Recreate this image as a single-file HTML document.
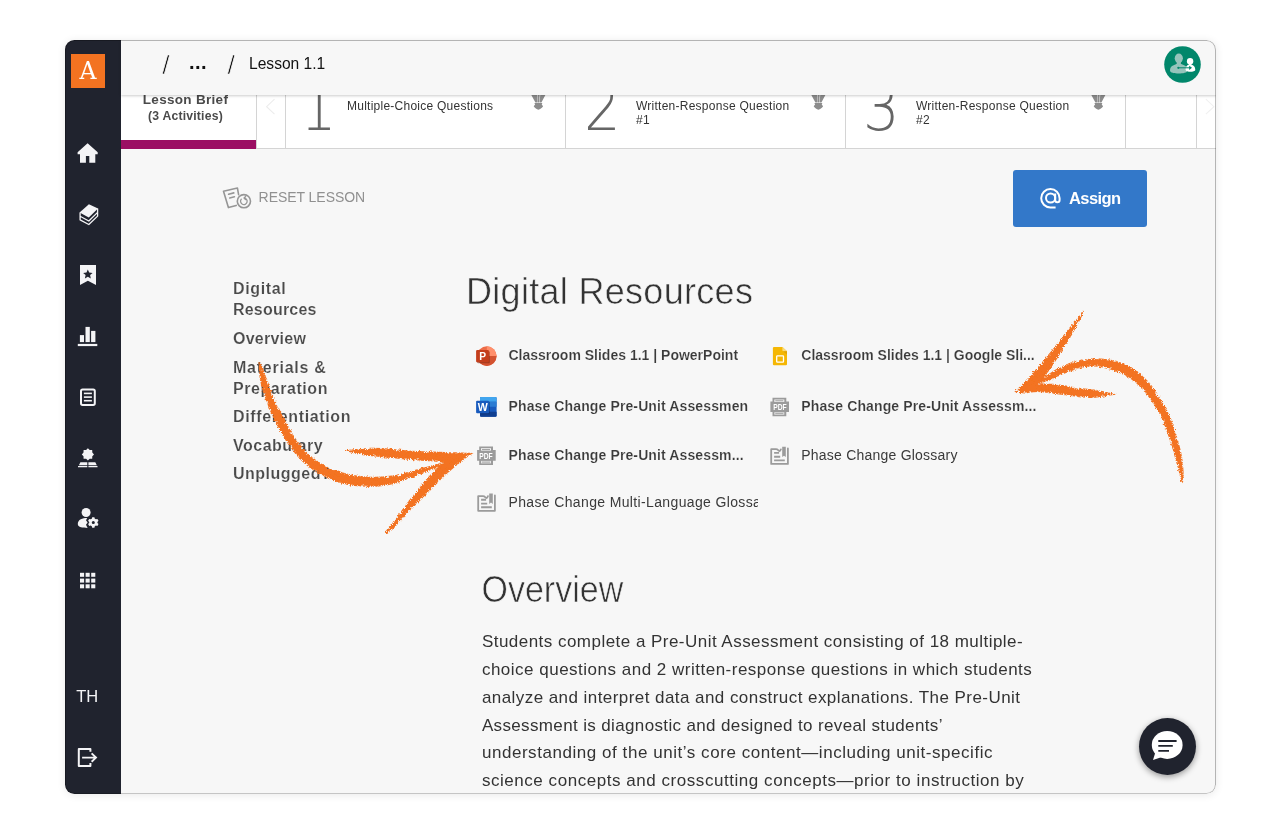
<!DOCTYPE html>
<html lang="en">
<head>
<meta charset="utf-8">
<title>Lesson 1.1</title>
<style>
*{box-sizing:border-box;margin:0;padding:0}
html,body{width:1280px;height:836px;overflow:hidden;background:#fff}
body{font-family:"Liberation Sans",sans-serif;color:#333;position:relative}
#shadow{position:absolute;left:65px;top:40.2px;width:1151px;height:754.1px;border-radius:9.5px;box-shadow:0 1px 8px rgba(0,0,0,.09)}
#frame{position:absolute;left:65px;top:40.2px;width:1151px;height:754.1px;border-radius:9.5px;overflow:hidden;background:#f7f7f7}
#frame:after{content:"";position:absolute;left:0;top:0;right:0;bottom:0;border:1px solid rgba(0,0,0,.27);border-bottom-color:rgba(0,0,0,.2);border-radius:9.5px;z-index:20}
#wrap{position:absolute;left:-65px;top:-40.2px;width:1280px;height:836px;will-change:transform}
.abs{position:absolute}
#side{position:absolute;left:65px;top:40px;width:56px;height:756px;background:#20232e}
#logo{position:absolute;left:71px;top:54px;width:34.2px;height:33.6px;background:#f37321;color:#fff;font-family:"DejaVu Serif","Liberation Serif",serif;font-size:23.5px;line-height:34.4px;text-align:center}
#th{position:absolute;left:65px;top:686px;width:44.5px;text-align:center;font-size:16.5px;line-height:20px;color:#f4f4f6;z-index:6}
#topbar{position:absolute;left:121px;top:40px;width:1096px;height:55px;background:#f7f7f7;box-shadow:0 1px 2.5px rgba(0,0,0,.2);z-index:3}
.sl{font-size:26.5px;color:#333;top:51.5px!important;-webkit-text-stroke:.7px #f7f7f7}
.cr{position:absolute;top:50px;line-height:26px;color:#111;z-index:4;white-space:nowrap}
#tabs{position:absolute;left:121px;top:95px;width:1096px;height:54px;background:#fff;border-bottom:1px solid #d4d4d4;z-index:1}
.vline{position:absolute;top:95px;width:1px;height:53px;background:#d4d4d4;z-index:2}
.tabtxt{position:absolute;font-size:12px;line-height:14.25px;color:#333;z-index:2;letter-spacing:.25px;white-space:nowrap}
.bignum{position:absolute;z-index:2;font-family:"DejaVu Sans Light","DejaVu Sans","Liberation Sans",sans-serif;font-weight:200;font-size:64px;line-height:70px;color:#666;top:73px;transform:scaleX(.9);transform-origin:0 0}
#brief{position:absolute;left:121px;top:92px;width:129px;text-align:center;font-weight:bold;color:#4a4a4a;z-index:2;white-space:nowrap}
#brief .a{font-size:13.5px;line-height:16px;letter-spacing:.3px}
#brief .b{font-size:12.2px;line-height:16px;letter-spacing:.2px}
#bar{position:absolute;left:121px;top:140.3px;width:134.6px;height:8.4px;background:#9b0f63;z-index:2}
#reset{position:absolute;left:258.6px;top:188px;font-size:14px;line-height:18px;color:#909090;letter-spacing:-.05px;white-space:nowrap}
#assign{position:absolute;left:1012.5px;top:169.8px;width:134.4px;height:57px;background:#3378c9;border-radius:3px}
#assign span{position:absolute;left:56.5px;top:18px;color:#fff;font-size:16.5px;font-weight:bold;line-height:20px;letter-spacing:-.6px}
#nav{position:absolute;left:233px;top:278.2px;font-size:16px;font-weight:bold;color:#4a4a4a;line-height:21px;white-space:nowrap;-webkit-text-stroke:.15px #f7f7f7}
#nav div{margin-bottom:7.66px}
h1{position:absolute;left:466px;top:269px;font-size:36px;font-weight:normal;color:#333;line-height:46px;white-space:nowrap;letter-spacing:.3px;-webkit-text-stroke:.55px #f7f7f7}
.res{position:absolute;font-size:14px;line-height:16px;color:#3a3a3a;white-space:nowrap;overflow:hidden;letter-spacing:.22px}
.res.b{font-weight:bold;letter-spacing:.12px;-webkit-text-stroke:.15px #f7f7f7}
.ico{position:absolute}
.il{position:absolute;color:#fff;font-weight:bold;line-height:11px;z-index:3}
h2{position:absolute;left:481.5px;top:570px;transform:scaleY(1.09);transform-origin:0 32px;font-size:34px;font-weight:normal;color:#333;line-height:40px;-webkit-text-stroke:.6px #f7f7f7}
#para{position:absolute;left:481.9px;top:628px;width:600px;font-size:17px;line-height:27.85px;color:#333;white-space:nowrap}
#chat{position:absolute;left:1138.9px;top:718.3px;width:56.8px;height:56.8px;border-radius:50%;background:#20232e;box-shadow:0 2px 6px rgba(0,0,0,.4)}
#avatar{position:absolute;left:1164px;top:44px;width:38px;height:38px;border-radius:50%;background:#12906a;z-index:5}
</style>
</head>
<body>
<div id="shadow"></div>
<div id="frame"><div id="wrap">
<div id="side"></div>
<div id="logo">A</div>
<div id="th">TH</div>
<svg class="abs" style="left:0;top:0;z-index:6" width="1280" height="836" viewBox="0 0 1280 836">
<g fill="#f4f4f6">
<path d="M87.6 143.3 L97.7 152.3 V154.2 H95.3 V162.8 H89.3 V156 H85.9 V162.8 H80 V154.2 H77.6 V152.3 Z"/>
<path d="M88.9 204.2 L98 208.4 L88.8 217.5 L79.6 212.4 Z"/>
<path d="M80 265 H96 V284.9 L87.9 280.7 L80 284.9 Z M87.8 269.4 L89.2 272.5 L92.6 272.9 L90.1 275.1 L90.8 278.4 L87.8 276.8 L84.9 278.4 L85.6 275.1 L83.1 272.9 L86.5 272.5 Z" fill-rule="evenodd"/>
<rect x="77.8" y="343.9" width="19.5" height="2.2"/>
<rect x="79.9" y="335.1" width="4.1" height="7"/>
<rect x="85.5" y="326.9" width="4.3" height="15.2"/>
<rect x="91.1" y="330.9" width="4.3" height="11.2"/>
<rect x="83.9" y="392.6" width="8" height="1.6"/><rect x="83.9" y="396.3" width="8" height="1.6"/><rect x="83.9" y="399.9" width="8" height="1.6"/>
<path d="M87.9 448.3 L89.7 450 L92.2 450.1 L92.3 452.6 L94 454.4 L92.3 456.2 L92.2 458.7 L89.7 458.8 L87.9 460.5 L86.1 458.8 L83.6 458.7 L83.5 456.2 L81.8 454.4 L83.5 452.6 L83.6 450.1 L86.1 450 Z"/>
<path d="M80.4 462.2 H87.3 V465.3 H78.9 Z M88.4 462.2 H95.3 L96.8 465.3 H88.4 Z M78 466 H87.3 V467.3 H78 Z M88.4 466 H97.5 V467.3 H88.4 Z"/>
<circle cx="86.1" cy="512.5" r="4.5"/>
<path d="M77.8 524 C77.8 519.5 82.5 518 87.2 518 L86 520.2 L87.6 522.4 L86 524.8 L87.6 527.9 C83 527.9 77.8 527.4 77.8 524 Z"/>
<path d="M92.2 517.2 H94.4 L94.8 518.7 L95.9 519.3 L97.4 518.9 L98.5 520.8 L97.4 521.9 V523 L98.5 524.1 L97.4 526 L95.9 525.6 L94.8 526.2 L94.4 527.7 H92.2 L91.8 526.2 L90.7 525.6 L89.2 526 L88.1 524.1 L89.2 523 V521.9 L88.1 520.8 L89.2 518.9 L90.7 519.3 L91.8 518.7 Z M93.3 520.9 A1.55 1.55 0 1 0 93.3 524 A1.55 1.55 0 1 0 93.3 520.9 Z" fill-rule="evenodd"/>
<g id="gr"><rect x="80" y="572.8" width="4.1" height="4"/><rect x="85.6" y="572.8" width="4.1" height="4"/><rect x="91.2" y="572.8" width="4.1" height="4"/></g>
<use href="#gr" y="5.8"/><use href="#gr" y="11.5"/>
</g>
<g fill="none" stroke="#f4f4f6">
<path d="M80.1 212.6 V219.9 L88.8 224.5 L97.6 216.1 V208.6 M80.1 216.2 L88.8 221 L97.6 212.4" stroke-width="1.3" stroke-linejoin="round"/>
<rect x="81" y="389.5" width="13.8" height="15.4" rx="1.6" stroke-width="2"/>
<path d="M90.4 751.8 V749 H78.8 V766.1 H90.4 V763" stroke-width="2" stroke-linejoin="round"/>
<path d="M82.1 757.6 H95.5 M91.6 753.4 L96 757.6 L91.6 761.8" stroke-width="1.9"/>
</g>
</svg>
<div id="tabs"></div>
<div id="brief"><div class="a">Lesson Brief</div><div class="b">(3 Activities)</div></div>
<div id="bar"></div>
<div class="vline" style="left:256px"></div>
<div class="vline" style="left:285px"></div>
<div class="vline" style="left:565px"></div>
<div class="vline" style="left:845px"></div>
<div class="vline" style="left:1125px"></div>
<div class="vline" style="left:1196px"></div>
<div class="bignum" style="left:300px">1</div><div class="bignum" style="left:584px">2</div><div class="bignum" style="left:863px">3</div>
<div class="tabtxt" style="left:347px;top:99px">Multiple-Choice Questions</div>
<div class="tabtxt" style="left:636px;top:99px">Written-Response Question<br>#1</div>
<div class="tabtxt" style="left:916px;top:99px">Written-Response Question<br>#2</div>
<svg class="abs" style="left:0;top:0;z-index:2" width="1280" height="836" viewBox="0 0 1280 836">
<defs>
<g id="badge" fill="#8c8c8c"><path d="M530.8 94 H536.9 L537.7 102.6 H535.4 Z M537.4 94 H539.8 L539.2 102.6 H538 Z M540.3 94 H545.9 L541.4 102.6 H539.6 Z M534.4 103.1 H542.4 L541.7 104.6 L543.1 106.3 C542 108 540 109.4 538.4 109.7 C536.8 109.4 534.8 108 533.7 106.3 L535.1 104.6 Z"/></g>
<g id="pdf"><path d="M479.2 446.5 H493 V450.1 H495.7 V460.8 H493 V464.9 H479.2 V460.8 H477.1 V450.1 H479.2 Z" fill="#9b9b9b"/><rect x="481" y="448.2" width="10" height="2.4" fill="#f3f3f3"/><rect x="482" y="449" width="8" height=".9" fill="#9b9b9b"/><rect x="481" y="460.9" width="10" height="2.5" fill="#e4e4e4"/><rect x="482" y="461.6" width="8" height="1" fill="#a8a8a8"/></g>
<g id="gloss" fill="none" stroke="#9b9b9b"><path d="M494.9 495.4 V510.8 H478.2 V496.1 H483 C485 496.1 485.6 498 486.6 498 C487.3 498 487.6 497.2 487.9 496.2" stroke-width="1.8" stroke-linejoin="round" stroke-linecap="round"/><path d="M481.1 499.8 H486.1 M481.1 503.6 H487.2 M481.1 507.3 H491.8" stroke-width="1.9"/><path d="M489.2 493.6 H492.8 V504 L491 502.6 L489.2 504 Z" fill="#9b9b9b" stroke="none"/></g>
</defs>
<use href="#badge"/><use href="#badge" x="280"/><use href="#badge" x="560"/>
<path d="M274.5 99.2 L266.6 106.7 L274.5 114.2" fill="none" stroke="#ececec" stroke-width="1.1"/><path d="M1205.9 99.2 L1213.9 106.7 L1205.9 114.2" fill="none" stroke="#f0f0f0" stroke-width="1.1"/>
<!-- reset icon -->
<g fill="none" stroke="#969696" stroke-width="1.6" stroke-linejoin="round" stroke-linecap="round">
<path d="M238.6 194.6 L237.4 188 L223.5 191.2 L228.4 207.6 L236.2 205.4"/>
<path d="M228.6 194.2 L233.8 192.9 M229.8 198 L234.4 196.8"/>
<circle cx="243.9" cy="201.2" r="6.6"/>
<path d="M241.3 199.2 A3.3 3.3 0 1 0 244 198 M244 198 L245.6 196.6 M244 198 L245.5 199.6" stroke-width="1.3"/>
</g>
<!-- assign @ -->
<g fill="none" stroke="#fff" stroke-width="2">
<circle cx="1050.6" cy="198" r="4.6"/>
<path d="M1055.6 207.5 H1050.4 A9.2 9.2 0 1 1 1059.6 198.3 V200 A2.2 2.2 0 0 1 1055.2 200 V193.4"/>
</g>
<!-- powerpoint -->
<circle cx="486.8" cy="356.1" r="9.8" fill="#ed6c47"/>
<path d="M486.8 346.3 A9.8 9.8 0 0 1 496.6 356.1 H486.8 Z" fill="#ff8f6b"/>
<path d="M477 356.1 H496.6 A9.8 9.8 0 0 1 477 356.1 Z" fill="#d35230"/>
<rect x="477.2" y="351.2" width="12.6" height="12" rx="1" fill="#7a2a14" opacity=".55"/>
<rect x="476.1" y="350.1" width="12.8" height="12.1" rx="1" fill="#c43e1c"/>
<!-- word -->
<rect x="480" y="396.9" width="16.6" height="19.9" rx="1.2" fill="#185abd"/>
<path d="M481.2 396.9 H495.4 A1.2 1.2 0 0 1 496.6 398.1 V401.8 H480 V398.1 A1.2 1.2 0 0 1 481.2 396.9 Z" fill="#41a5ee"/>
<rect x="480" y="401.8" width="16.6" height="5" fill="#2b7cd3"/>
<path d="M480 411.8 H496.6 V415.6 A1.2 1.2 0 0 1 495.4 416.8 H481.2 A1.2 1.2 0 0 1 480 415.6 Z" fill="#103f91"/>
<rect x="480" y="401.8" width="10" height="12.6" fill="#0b2a63" opacity=".45"/>
<rect x="476.1" y="400.7" width="12.9" height="12.5" rx="1" fill="#185abd"/>
<!-- google slides -->
<path d="M774 346.9 H782.4 L787 351.3 V364.2 A1.1 1.1 0 0 1 785.9 365.3 H774 A1.1 1.1 0 0 1 772.9 364.2 V348 A1.1 1.1 0 0 1 774 346.9 Z" fill="#f5b704"/>
<path d="M782.4 346.9 L787 351.3 H783.4 A1 1 0 0 1 782.4 350.3 Z" fill="#fadc7c"/>
<path d="M783 351.3 H787 V354.4 Z" fill="#d9a006" opacity=".8"/>
<rect x="776.7" y="355.9" width="6.8" height="6.3" rx=".6" fill="none" stroke="#fff" stroke-width="1.3"/>
<!-- pdf + glossary icons -->
<use href="#pdf"/><use href="#pdf" x="293.3" y="-48.7"/>
<use href="#gloss"/><use href="#gloss" x="293" y="-46.9"/>
</svg>
<div id="topbar"></div>
<div class="cr sl" style="left:162.2px">/</div><div class="cr" style="left:189px;top:49px;font-size:20px;font-weight:bold;letter-spacing:.5px">...</div><div class="cr sl" style="left:227.6px">/</div><div class="cr" style="left:249px;top:51px;font-size:15.6px">Lesson 1.1</div>
<svg id="avsvg" class="abs" style="left:1164px;top:45.5px;z-index:5" width="37" height="37" viewBox="1164 45.5 37 37">
<circle cx="1182.5" cy="64" r="18.3" fill="#01876b"/>
<ellipse cx="1178.8" cy="57.8" rx="4.1" ry="4.8" fill="#95c4bb"/><rect x="1176.7" y="60" width="4.2" height="5" fill="#95c4bb"/>
<path d="M1170 70 C1170 65.5 1173.5 64.6 1176.4 63.4 H1181.2 C1184.5 64.6 1187.4 65.4 1187.4 70 C1187.4 72.2 1183 73 1178.7 73 C1174.4 73 1170 72.2 1170 70 Z" fill="#95c4bb"/>
<circle cx="1190.1" cy="60.7" r="3.2" fill="#fff"/><rect x="1188.8" y="62" width="2.6" height="4" fill="#fff"/>
<path d="M1185.6 69.4 C1185.6 66 1187 64.6 1188.6 64.2 H1191.6 C1193.4 64.6 1195.3 66 1195.3 69.4 C1195.3 70.6 1192.6 71.2 1190.4 71.2 C1188.2 71.2 1185.6 70.6 1185.6 69.4 Z" fill="#fff"/>
<circle cx="1178.3" cy="67.3" r="1.1" fill="#01876b"/>
<path d="M1178.3 67.3 H1190" stroke="#01876b" stroke-width="1" fill="none"/>
<path d="M1189.2 65.2 L1192 67.3 L1189.2 69.4 Z" fill="#01876b"/>
</svg>
<div id="reset">RESET LESSON</div>
<div id="assign"><span>Assign</span></div>
<div id="nav"><div><span style="letter-spacing:.65px">Digital</span><br><span style="letter-spacing:.2px">Resources</span></div><div><span style="letter-spacing:.25px">Overview</span></div><div><span style="letter-spacing:.75px">Materials &amp;</span><br><span style="letter-spacing:.55px">Preparation</span></div><div><span style="letter-spacing:.65px">Differentiation</span></div><div><span style="letter-spacing:.5px">Vocabulary</span></div><div><span style="letter-spacing:.5px">Unplugged?</span></div></div>
<h1>Digital Resources</h1>
<div class="res b" style="left:508.5px;top:346.8px;letter-spacing:0">Classroom Slides 1.1 | PowerPoint</div>
<div class="res b" style="left:801.3px;top:346.8px;letter-spacing:0">Classroom Slides 1.1 | Google Sli...</div>
<div class="res b" style="left:508.5px;top:397.8px;width:239px">Phase Change Pre-Unit Assessment</div>
<div class="res b" style="left:801.3px;top:397.8px">Phase Change Pre-Unit Assessm...</div>
<div class="res b" style="left:508.5px;top:446.8px">Phase Change Pre-Unit Assessm...</div>
<div class="res" style="left:801.3px;top:446.8px">Phase Change Glossary</div>
<div class="res" style="left:508.5px;top:493.8px;width:249px;letter-spacing:.36px">Phase Change Multi-Language Glossary</div>
<div class="il" style="left:479.3px;top:350.8px;font-size:10.2px">P</div>
<div class="il" style="left:476.6px;top:402.1px;font-size:10.6px;width:12px;text-align:center;letter-spacing:-.3px">W</div>
<div class="il" style="left:476.4px;top:450.7px;font-size:8.4px;width:20px;text-align:center;transform:scaleX(.8)">PDF</div>
<div class="il" style="left:769.7px;top:402px;font-size:8.4px;width:20px;text-align:center;transform:scaleX(.8)">PDF</div>
<h2>Overview</h2>
<div id="para"><span style="letter-spacing:0.47px">Students complete a Pre-Unit Assessment consisting of 18 multiple-</span><br><span style="letter-spacing:0.5px">choice questions and 2 written-response questions in which students</span><br><span style="letter-spacing:0.44px">analyze and interpret data and construct explanations. The Pre-Unit</span><br><span style="letter-spacing:0.36px">Assessment is diagnostic and designed to reveal students’</span><br><span style="letter-spacing:0.55px">understanding of the unit’s core content—including unit-specific</span><br><span style="letter-spacing:0.546px">science concepts and crosscutting concepts—prior to instruction by</span></div>
<div id="chat"></div>
<svg class="abs" style="left:1139px;top:718px;z-index:3" width="57" height="57" viewBox="1139 718 57 57">
<ellipse cx="1167.2" cy="744.9" rx="15.4" ry="14" fill="#fff"/>
<path d="M1155.5 752 L1153 759.9 L1162 757 Z" fill="#fff"/>
<path d="M1158.3 741 H1176.6 M1158.3 745.9 H1172.8 M1158.3 750.9 H1169" stroke="#20232e" stroke-width="1.8" fill="none"/>
</svg>
<svg id="arrows" class="abs" style="left:0;top:0;z-index:7" width="1280" height="836" viewBox="0 0 1280 836">
<defs><filter id="rough" x="-5%" y="-5%" width="110%" height="110%"><feTurbulence type="fractalNoise" baseFrequency="0.3" numOctaves="2" seed="4" result="n"/><feDisplacementMap in="SourceGraphic" in2="n" scale="3" xChannelSelector="R" yChannelSelector="G" result="d"/><feMorphology in="d" operator="erode" radius="1" result="core"/><feTurbulence type="fractalNoise" baseFrequency="0.7" numOctaves="2" seed="9" result="n2"/><feColorMatrix in="n2" type="matrix" values="0 0 0 0 0 0 0 0 0 0 0 0 0 0 0 0 0 0 10 -3.9" result="mask"/><feComposite in="d" in2="mask" operator="in" result="fray"/><feMerge><feMergeNode in="core"/><feMergeNode in="fray"/></feMerge></filter></defs>
<g fill="#f37321" filter="url(#rough)">
<path d="M258.5 362.0 C258.8 365.3 259.1 375.4 260.3 381.8 C261.5 388.2 263.7 394.1 265.9 400.2 C268.1 406.3 270.5 412.5 273.4 418.6 C276.3 424.7 279.9 431.1 283.5 437.0 C287.1 442.9 291.0 448.7 295.2 453.7 C299.4 458.7 303.6 463.2 308.6 467.1 C313.6 471.0 320.1 474.5 325.3 477.2 C330.5 479.9 335.1 481.6 340.0 483.1 C344.9 484.6 348.4 485.4 354.4 486.0 C360.4 486.6 369.2 487.1 375.9 486.7 C382.6 486.3 388.6 485.4 394.6 483.8 C400.6 482.2 406.5 479.3 411.8 477.4 C417.1 475.5 421.9 474.1 426.2 472.4 C430.5 470.7 435.7 468.1 437.6 467.3 C436.7 468.3 434.8 470.0 431.9 473.1 C429.0 476.2 424.2 481.4 420.4 486.0 C416.6 490.6 412.7 495.4 408.9 500.4 C405.1 505.4 401.2 511.2 397.4 516.2 C393.6 521.2 388.0 527.3 386.0 530.5 C384.0 533.7 385.6 534.7 385.5 535.5 C387.0 534.2 391.4 530.8 394.6 527.6 C397.8 524.4 400.5 520.5 404.6 516.2 C408.7 511.9 414.2 506.6 419.0 501.8 C423.8 497.0 428.5 492.2 433.3 487.4 C438.1 482.6 442.9 477.5 447.7 473.1 C452.5 468.7 457.8 464.2 462.1 460.9 C466.4 457.5 471.6 454.3 473.5 453.0 C470.4 452.9 461.6 452.6 454.9 452.3 C448.2 452.1 440.5 451.8 433.3 451.5 C426.1 451.2 419.0 451.3 411.8 450.8 C404.6 450.3 397.5 449.2 390.3 448.7 C383.1 448.2 376.4 447.7 368.7 447.9 C361.0 448.1 348.4 449.7 344.3 450.1 L344.3 450.6 C347.2 451.4 355.0 454.0 361.5 455.1 C368.0 456.2 375.9 456.6 383.1 457.3 C390.3 458.0 397.4 458.8 404.6 459.4 C411.8 460.0 419.7 460.4 426.2 460.9 C432.7 461.4 440.5 462.1 443.4 462.3 L440.5 463.0 C436.9 464.0 426.2 466.9 419.0 468.8 C411.8 470.7 404.6 473.2 397.4 474.5 C390.2 475.8 383.1 476.6 375.9 476.7 C368.7 476.8 360.4 476.0 354.4 475.2 C348.4 474.4 344.0 472.7 340.0 471.6 C336.0 470.5 334.2 470.7 330.3 468.8 C326.4 466.9 321.1 463.5 316.9 460.4 C312.7 457.3 309.1 454.6 305.2 450.4 C301.3 446.2 297.1 440.9 293.5 435.3 C289.9 429.7 286.6 422.8 283.5 416.9 C280.4 411.0 277.7 406.0 275.1 400.2 C272.5 394.4 270.4 388.0 268.0 381.8 C265.6 375.6 262.2 366.1 261.0 363.0 Z"/>
<path d="M1014.2 392.1 C1016.0 390.4 1020.8 385.8 1024.7 381.6 C1028.7 377.4 1033.5 372.2 1037.9 367.1 C1042.3 362.1 1046.7 356.8 1051.1 351.3 C1055.5 345.8 1060.0 339.5 1064.2 334.2 C1068.4 328.9 1072.8 323.6 1076.1 319.7 C1079.4 315.8 1082.6 312.0 1083.9 310.5 L1083.9 312.5 C1082.6 315.0 1078.9 322.5 1076.1 327.6 C1073.2 332.8 1069.9 338.3 1066.8 343.4 C1063.7 348.4 1060.4 353.5 1057.6 357.9 C1054.8 362.3 1052.1 366.2 1049.7 369.7 C1047.3 373.2 1044.3 377.4 1043.2 378.9 L1043.2 377.6 C1045.6 376.1 1052.6 371.0 1057.6 368.4 C1062.6 365.8 1067.9 363.4 1073.4 361.8 C1078.9 360.2 1086.1 359.2 1090.5 358.6 C1094.9 358.0 1095.6 358.0 1100.0 358.4 C1104.4 358.8 1111.2 359.2 1116.8 360.9 C1122.4 362.6 1128.2 364.9 1133.5 368.4 C1138.8 371.9 1144.1 376.8 1148.6 381.8 C1153.1 386.8 1156.7 392.7 1160.3 398.6 C1163.9 404.5 1167.6 410.6 1170.4 417.0 C1173.2 423.4 1175.1 430.4 1177.1 437.1 C1179.0 443.8 1181.0 450.5 1182.1 457.2 C1183.2 463.9 1183.8 473.0 1183.8 477.3 C1183.8 481.6 1182.6 482.2 1182.4 483.2 C1182.2 482.8 1182.2 484.2 1181.2 480.7 C1180.2 477.2 1178.0 468.6 1176.2 462.2 C1174.4 455.8 1172.5 448.5 1170.4 442.1 C1168.3 435.7 1166.2 429.6 1163.7 423.7 C1161.2 417.8 1158.4 412.2 1155.3 407.0 C1152.2 401.8 1148.8 397.0 1145.2 392.7 C1141.6 388.4 1137.7 384.2 1133.5 381.0 C1129.3 377.8 1124.2 375.2 1120.0 373.2 C1115.8 371.2 1112.2 370.1 1108.0 369.0 C1103.8 367.9 1099.4 366.6 1094.5 366.5 C1089.6 366.4 1084.0 367.1 1078.7 368.4 C1073.4 369.7 1068.0 372.2 1062.9 374.3 C1057.9 376.4 1052.4 379.5 1048.4 380.9 C1044.5 382.3 1040.7 382.6 1039.2 382.9 L1039.2 383.6 C1042.3 383.7 1051.2 383.6 1057.6 384.2 C1064.0 384.8 1070.8 386.5 1077.4 387.5 C1084.0 388.5 1090.8 389.0 1097.1 390.1 C1103.4 391.2 1112.4 393.4 1115.5 394.1 L1115.5 394.7 C1112.4 395.1 1101.9 396.8 1097.1 397.4 C1092.3 397.9 1091.0 398.2 1086.6 398.0 C1082.2 397.8 1076.1 396.8 1070.8 396.1 C1065.5 395.5 1060.5 394.8 1055.0 394.1 C1049.5 393.4 1043.0 392.2 1037.9 392.1 C1032.9 392.0 1028.7 393.3 1024.7 393.4 C1020.8 393.5 1016.0 392.9 1014.2 392.8 Z"/>
</g>
</svg>
</div></div>
</body>
</html>
